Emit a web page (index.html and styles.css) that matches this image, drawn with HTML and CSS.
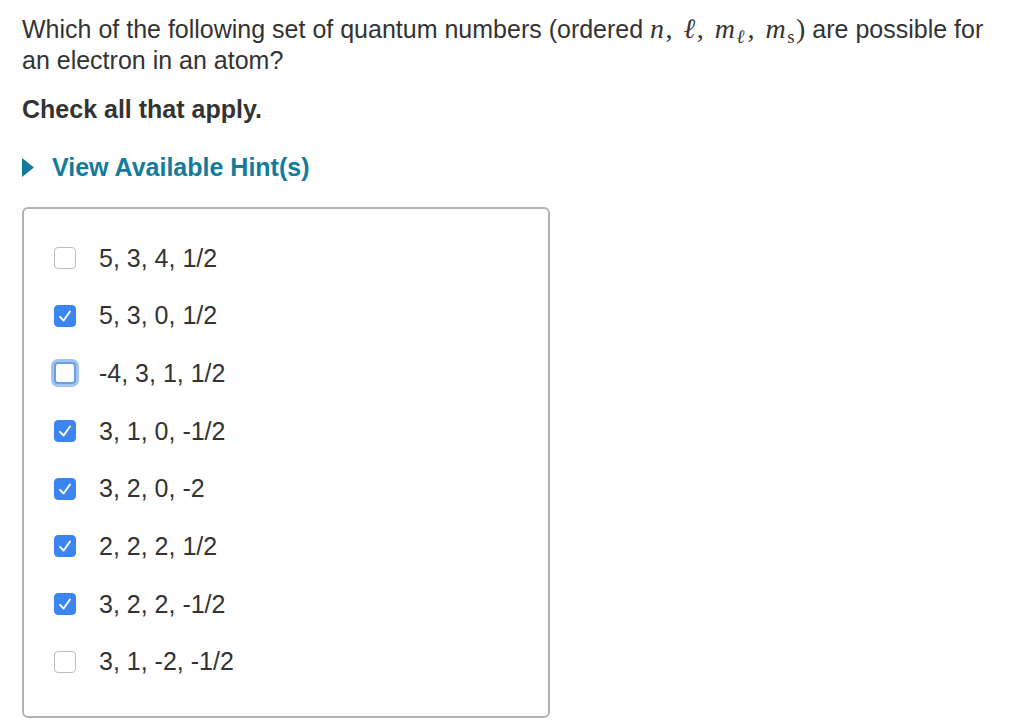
FILE: index.html
```html
<!DOCTYPE html>
<html lang="en">
<head>
    <meta charset="UTF-8">
    <title>Quantum numbers</title>
    <link rel="stylesheet" href="styles.css">
</head>
<body>
    <main class="problem">
        <p class="question">Which of the following set of quantum numbers (ordered <span class="math"><i>n</i><span class="sep">,</span><i>ℓ</i><span class="sep">,</span><i>m</i><sub><i>ℓ</i></sub><span class="sep">,</span><i>m</i><sub>s</sub>)</span> are possible for an electron in an atom?</p>
        <p class="instruction">Check all that apply.</p>

        <div class="hint">
            <svg class="hint-arrow" width="12" height="19" viewBox="0 0 12 19"><polygon points="0,0 12,9.5 0,19" fill="#137b9b"/></svg>
            <span>View Available Hint(s)</span>
        </div>

        <div class="choices">
            <label class="choice"><span class="box"></span>5, 3, 4, 1/2</label>
            <label class="choice"><span class="box checked"></span>5, 3, 0, 1/2</label>
            <label class="choice"><span class="box focused"></span>-4, 3, 1, 1/2</label>
            <label class="choice"><span class="box checked"></span>3, 1, 0, -1/2</label>
            <label class="choice"><span class="box checked"></span>3, 2, 0, -2</label>
            <label class="choice"><span class="box checked"></span>2, 2, 2, 1/2</label>
            <label class="choice"><span class="box checked"></span>3, 2, 2, -1/2</label>
            <label class="choice"><span class="box"></span>3, 1, -2, -1/2</label>
        </div>
    </main>
</body>
</html>
```

FILE: styles.css
```css
/* Page */
body {
    font-family: "Liberation Sans", Arial, sans-serif;
    margin: 0;
    padding: 0;
    background-color: #fff;
    color: #333;
    font-size: 25px;
    line-height: 31px;
}
.problem {
    padding: 13px 22px 0 22px;
}
.question {
    margin: 0;
}
.math {
    font-family: "Liberation Serif", "Times New Roman", serif;
    font-size: 28px;
}
.math i {
    margin-right: 1.5px;
}
.math .sep {
    margin-right: 11px;
}
.math sub {
    font-size: 19px;
    line-height: 0;
    vertical-align: -5px;
    font-style: normal;
    margin-right: 1.5px;
}
.instruction {
    margin: 18px 0 0 0;
    font-weight: bold;
}

/* Hint toggle */
.hint {
    margin-top: 27px;
    display: flex;
    align-items: center;
    gap: 18px;
    color: #137b9b;
    font-weight: bold;
}
.hint-arrow {
    flex: none;
}

/* Answer box */
.choices {
    margin-top: 24px;
    width: 494px;
    border: 2px solid #b3b3b3;
    border-radius: 6px;
    padding: 33.5px 0 38.5px 30px;
    display: flex;
    flex-direction: column;
    gap: 26.7px;
}
.choice {
    display: flex;
    align-items: center;
    gap: 23px;
    height: 31px;
}
.box {
    width: 22px;
    height: 22px;
    box-sizing: border-box;
    border: 1px solid #bdbdbd;
    border-radius: 4px;
    background-color: #fff;
    flex: none;
}
.box.checked {
    border-color: #3a85f2;
    background-color: #3a85f2;
    background-image: url("data:image/svg+xml,%3Csvg xmlns='http://www.w3.org/2000/svg' viewBox='0 0 22 22'%3E%3Cpath d='M5.5 12 L9.5 16 L16.5 6' fill='none' stroke='white' stroke-width='2.2' stroke-linecap='round' stroke-linejoin='round'/%3E%3C/svg%3E");
}
.box.focused {
    border: 2px solid #6a9fe8;
    box-shadow: 0 0 0 3px #a3c4f3;
}
```
